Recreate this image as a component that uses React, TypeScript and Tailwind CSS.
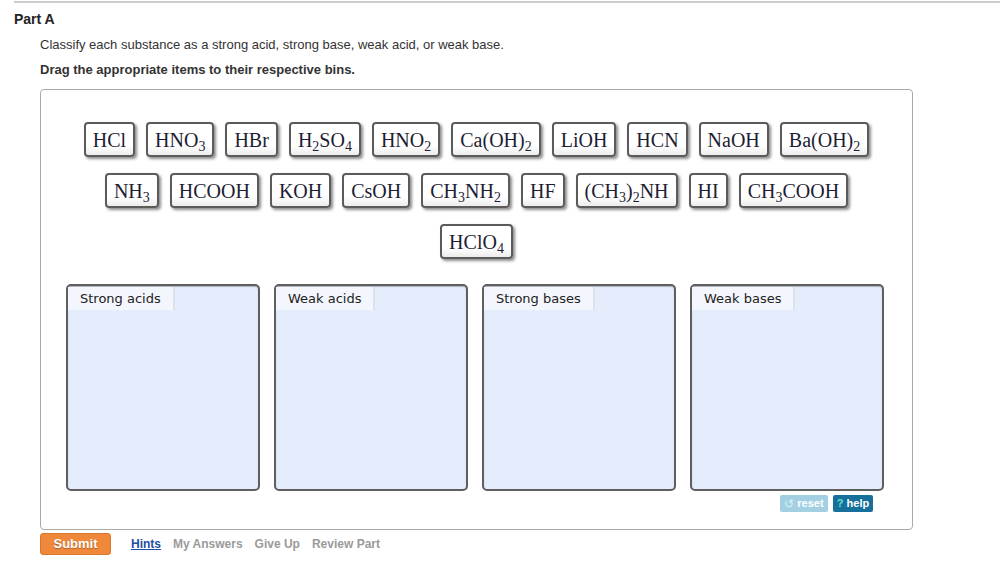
import React from "react";

type Chip = { parts: (string | [string])[] };

// [x] marks a subscript
const rows: (string | [string])[][][] = [
  [["HCl"], ["HNO", ["3"]], ["HBr"], ["H", ["2"], "SO", ["4"]], ["HNO", ["2"]], ["Ca(OH)", ["2"]], ["LiOH"], ["HCN"], ["NaOH"], ["Ba(OH)", ["2"]]],
  [["NH", ["3"]], ["HCOOH"], ["KOH"], ["CsOH"], ["CH", ["3"], "NH", ["2"]], ["HF"], ["(CH", ["3"], ")", ["2"], "NH"], ["HI"], ["CH", ["3"], "COOH"]],
  [["HClO", ["4"]]],
];

const bins = ["Strong acids", "Weak acids", "Strong bases", "Weak bases"];

function ChipItem({ parts }: Chip) {
  return (
    <div className="flex h-[35px] items-center rounded-[4px] border-2 border-[#5b5b5b] bg-gradient-to-b from-white from-70% to-[#ececec] px-[7px] text-[20px] text-[#1d1d33] shadow-[2px_2px_3px_rgba(0,0,0,0.45)] [font-family:'Liberation_Serif',serif]">
      <span className="leading-none">
        {parts.map((p, i) =>
          typeof p === "string" ? (
            p
          ) : (
            <sub key={i} className="bottom-[-0.35em] text-[14px]">
              {p[0]}
            </sub>
          )
        )}
      </span>
    </div>
  );
}

export default function App() {
  return (
    <div className="min-h-[568px] bg-white text-[#333] [font-family:'Liberation_Sans',Arial,sans-serif]">
      <div className="pt-px pl-[14px]">
        <div className="h-[2px] bg-[#cccccc]" />
      </div>

      {/* Header */}
      <div className="pl-[14px] pt-[7px] text-[14px] leading-[18px] font-bold text-[#222]">Part A</div>
      <div className="pl-[40px]">
        <p className="mt-[9px] text-[13px] leading-[16px] text-[#333]">Classify each substance as a strong acid, strong base, weak acid, or weak base.</p>
        <p className="mt-[9px] text-[13px] leading-[16px] font-bold text-[#333]">Drag the appropriate items to their respective bins.</p>

        {/* Drag area */}
        <div className="mt-[11px] flex h-[441px] w-[873px] flex-col rounded-[4px] border border-[#a9a9a9] bg-white">
          <div className="flex flex-col gap-[16px] pt-[32px]">
            {rows.map((row, r) => (
              <div key={r} className="flex justify-center gap-[11px]">
                {row.map((parts, i) => (
                  <ChipItem key={i} parts={parts} />
                ))}
              </div>
            ))}
          </div>

          <div className="mt-[25px] flex gap-[14px] pl-[25px]">
            {bins.map((b) => (
              <div
                key={b}
                className="h-[207px] w-[194px] rounded-[5px] border-2 border-[#5f5f5f] bg-[#e5ecfb] shadow-[inset_0_1px_1px_rgba(0,0,0,0.25)]"
              >
                <div className="inline-flex h-[23px] items-center border-r-2 border-[#dde3ee] bg-[#f3f6fd] pl-[12px] pr-[12px] text-[13px] text-[#222] [font-family:'DejaVu_Sans',Verdana,sans-serif]">
                  {b}
                </div>
              </div>
            ))}
          </div>

          <div className="mt-[4px] flex justify-end gap-[5px] pr-[39px] text-[11px] font-bold text-white">
            <div className="flex h-[17px] w-[48px] items-center justify-center gap-[3px] rounded-[2px] bg-[#a3cfe3]">
              <span className="text-[12px] font-normal text-[#d8f0f8]">↺</span>
              <span>reset</span>
            </div>
            <div className="flex h-[17px] w-[40px] items-center justify-center gap-[3px] rounded-[2px] bg-[#17709c]">
              <span className="text-[#63e3c6]">?</span>
              <span>help</span>
            </div>
          </div>
        </div>

        {/* Actions */}
        <div className="mt-[3px] flex items-center gap-[12px] text-[12px] font-bold">
          <button className="mr-[8px] h-[22px] w-[71px] rounded-[3px] border border-[#d8782e] bg-[#f0883b] text-[13px] font-bold text-white [text-shadow:0_1px_1px_rgba(0,0,0,0.3)]">
            Submit
          </button>
          <a className="text-[#1c4fa3] underline">Hints</a>
          <span className="text-[#9a9a9a]">My Answers</span>
          <span className="text-[#9a9a9a]">Give Up</span>
          <span className="text-[#9a9a9a]">Review Part</span>
        </div>
      </div>
    </div>
  );
}
